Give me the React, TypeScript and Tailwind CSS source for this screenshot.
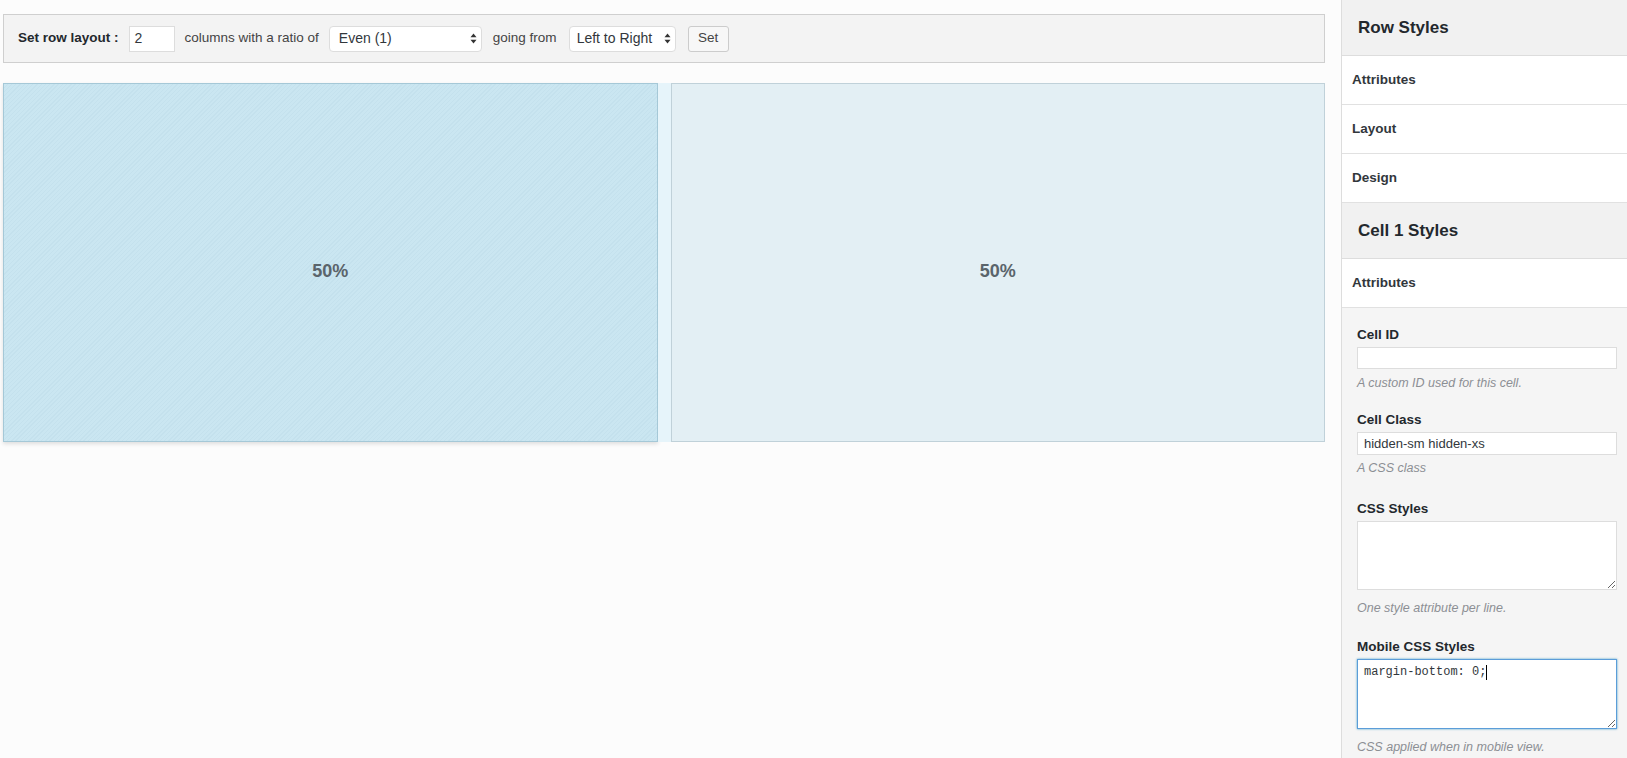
import React from 'react'

// Panels-style row builder: layout toolbar, two cells, and the styles sidebar

const SelectArrows = () => (
  <svg width="7" height="11" viewBox="0 0 7 11" className="shrink-0">
    <path d="M3.5 0.5L6.5 4.3H0.5Z" fill="#333" />
    <path d="M3.5 10.5L6.5 6.7H0.5Z" fill="#333" />
  </svg>
)

const Field = ({ label, help, children, helpGap = 'mt-[6px]', gap = 'mb-[21px]' }: { label: string; help: string; children: React.ReactNode; helpGap?: string; gap?: string }) => (
  <div className={gap}>
    <div className="text-[13.5px] leading-4 font-bold text-[#23282d]">{label}</div>
    <div className="mt-1">{children}</div>
    <div className={`${helpGap} text-[12.5px] leading-4 italic text-[#8c8f94]`}>{help}</div>
  </div>
)

const SideRow = ({ label }: { label: string }) => (
  <div className="shrink-0 h-[49px] flex items-center pl-[10px] bg-white border-b border-[#e1e1e1] text-[13.5px] font-bold text-[#32373c]">
    {label}
  </div>
)

const SideHeader = ({ label }: { label: string }) => (
  <div className="shrink-0 h-[56px] flex items-center pl-4 bg-[#f1f1f1] border-b border-[#dddddd] text-[17px] font-bold text-[#23282d]">
    {label}
  </div>
)

export default function App() {
  return (
    <div className="flex h-[758px] w-[1627px] overflow-hidden bg-[#fcfcfc] font-['Liberation_Sans',Arial,sans-serif] text-[#32373c]">
      {/* Main editing area */}
      <div className="flex-1 pl-[3px] pr-[16px] pt-[14px]">
        {/* Row layout toolbar */}
        <div className="h-[49px] flex items-center pl-[14px] bg-[#f3f3f3] border border-[#cfcfcf] text-[13.5px]">
          <span className="font-bold text-[#23282d]">Set row layout :</span>
          <div className="ml-[10px] w-[46px] h-[26px] bg-white border border-[#dddddd] flex items-center pl-[5px] text-[14px] text-[#32373c]">2</div>
          <span className="ml-[10px] text-[#444]">columns with a ratio of</span>
          <div className="ml-[10px] w-[153px] h-[26px] bg-white border border-[#dddddd] rounded-[4px] flex items-center justify-between pl-[9px] pr-[4px] text-[14px] text-[#32373c]">
            <span>Even (1)</span>
            <SelectArrows />
          </div>
          <span className="ml-[11px] text-[#444]">going from</span>
          <div className="ml-[12px] w-[107px] h-[26px] bg-white border border-[#dddddd] rounded-[4px] flex items-center justify-between pl-[7px] pr-[4px] text-[14px] text-[#32373c]">
            <span>Left to Right</span>
            <SelectArrows />
          </div>
          <div className="ml-[12px] w-[41px] h-[26px] bg-[#f7f7f7] border border-[#cccccc] rounded-[3px] flex items-center justify-center text-[#444]">Set</div>
        </div>

        {/* Row cells */}
        <div className="mt-[20px] h-[359px] flex">
          <div className="flex-1 flex items-center justify-center pt-[18px] border border-[#a5c8d7] bg-[#c8e4ef] bg-[repeating-linear-gradient(-45deg,#c4e1ed_0px,#c4e1ed_1px,#cae6f1_1px,#cae6f1_3px)] shadow-[0_2px_4px_rgba(0,0,0,0.12)]">
            <span className="text-[18px] font-bold text-[#5a646b]">50%</span>
          </div>
          <div className="w-[13px] bg-[#e6f4fa]" />
          <div className="flex-1 flex items-center justify-center pt-[18px] border border-[#c0d1d9] bg-[#e3eff4]">
            <span className="text-[18px] font-bold text-[#5a646b]">50%</span>
          </div>
        </div>
      </div>

      {/* Styles sidebar */}
      <div className="w-[286px] shrink-0 border-l border-[#dddddd] bg-[#f5f5f5] flex flex-col">
        <SideHeader label="Row Styles" />
        <SideRow label="Attributes" />
        <SideRow label="Layout" />
        <SideRow label="Design" />
        <SideHeader label="Cell 1 Styles" />
        <SideRow label="Attributes" />

        <div className="shrink-0 pl-[15px] pr-[10px] pt-[19px]">
          <Field label="Cell ID" help="A custom ID used for this cell.">
            <div className="h-[22px] bg-white border border-[#dddddd]" />
          </Field>
          <Field label="Cell Class" help="A CSS class" helpGap="mt-[5px]" gap="mb-[25px]">
            <div className="h-[23px] bg-white border border-[#dddddd] flex items-center pl-[6px] text-[13px] text-[#32373c]">hidden-sm hidden-xs</div>
          </Field>
          <Field label="CSS Styles" help="One style attribute per line." helpGap="mt-[10px]" gap="mb-[23px]">
            <textarea readOnly className="block w-full h-[69px] bg-white border border-[#dddddd] resize-y outline-none" />
          </Field>
          <Field label="Mobile CSS Styles" help="CSS applied when in mobile view." helpGap="mt-[10px]">
            <div className="relative">
              <textarea
                readOnly
                defaultValue="margin-bottom: 0;"
                className="block w-full h-[70px] bg-white border border-[#5b9dd9] shadow-[0_0_2px_rgba(30,140,190,0.8)] resize-y outline-none pl-[6px] pt-[5px] font-['Liberation_Mono','Courier_New',monospace] text-[12px] leading-[14px] text-[#32373c]"
              />
              <div className="absolute left-[129px] top-[6px] w-px h-[15px] bg-black" />
            </div>
          </Field>
        </div>
      </div>
    </div>
  )
}
